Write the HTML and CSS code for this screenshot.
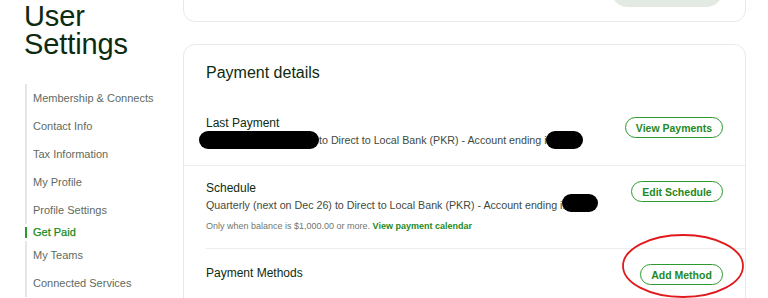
FILE: index.html
```html
<!DOCTYPE html>
<html lang="en">
<head>
<meta charset="utf-8">
<title>User Settings</title>
<link rel="stylesheet" href="styles.css">
</head>
<body>
<div class="page">
  <aside class="sidebar">
    <h1 class="title"><span class="title-line">User</span><span class="title-line">Settings</span></h1>
    <nav class="nav">
      <a class="nav-item">Membership &amp; Connects</a>
      <a class="nav-item">Contact Info</a>
      <a class="nav-item">Tax Information</a>
      <a class="nav-item">My Profile</a>
      <a class="nav-item">Profile Settings</a>
      <a class="nav-item active">Get Paid</a>
      <a class="nav-item">My Teams</a>
      <a class="nav-item">Connected Services</a>
    </nav>
  </aside>
  <main class="main">
    <section class="card card-top">
      <span class="ghost-btn"></span>
    </section>
    <section class="card card-pay">
      <h2 class="card-title">Payment details</h2>
      <div class="row row-first">
        <div class="row-body">
          <div class="row-title">Last Payment</div>
          <div class="row-sub"><span class="blob blob-amount"></span><span>to Direct to Local Bank (PKR) - Account ending in</span><span class="blob blob-acct"></span></div>
        </div>
        <button class="btn btn-first">View Payments</button>
      </div>
      <div class="row row-second">
        <div class="row-body">
          <div class="row-title">Schedule</div>
          <div class="row-sub"><span>Quarterly (next on Dec 26) to Direct to Local Bank (PKR) - Account ending in</span><span class="blob blob-acct2"></span></div>
          <div class="row-note">Only when balance is $1,000.00 or more. <a class="link">View payment calendar</a></div>
        </div>
        <button class="btn btn-second">Edit Schedule</button>
      </div>
      <div class="divider-inset"></div>
      <div class="row row-third">
        <div class="row-body">
          <div class="row-title">Payment Methods</div>
        </div>
        <button class="btn btn-third">Add Method</button>
      </div>
    </section>
  </main>
  <svg class="annotation" width="126" height="68" viewBox="0 0 126 68" aria-hidden="true">
    <ellipse cx="63" cy="33" rx="60" ry="31" fill="none" stroke="#e2191c" stroke-width="1.8"/>
  </svg>
</div>
</body>
</html>
```

FILE: styles.css
```css
* { box-sizing: border-box; }
html, body { margin: 0; padding: 0; background: #ffffff; }
body {
  font-family: "Liberation Sans", Arial, sans-serif;
  color: #0d2b10;
  overflow: hidden;
  height: 298px;
}
.page {
  position: relative;
  display: flex;
  width: 768px;
  height: 298px;
}
.sidebar {
  width: 183px;
  flex: none;
  padding-left: 24px;
}
.title {
  margin: 0;
  padding-top: 3px;
  font-size: 29px;
  font-weight: 400;
  color: #0d2b10;
  letter-spacing: -0.1px;
}
.title-line {
  display: block;
  height: 28px;
  line-height: 27px;
}
.nav {
  margin-top: 25px;
  margin-left: 1px;
  display: flex;
  flex-direction: column;
}
.nav-item {
  display: block;
  height: 28px;
  line-height: 28px;
  padding-left: 6px;
  border-left: 2px solid #e2e7e2;
  font-size: 11px;
  color: #5f6b60;
  white-space: nowrap;
}
.nav-item.active {
  height: 11px;
  line-height: 11px;
  margin: 3px 0;
  border-left: 2px solid #2c9a2c;
  color: #1b8a1b;
  font-weight: 400;
  -webkit-text-stroke: 0.25px #1b8a1b;
}
.main {
  width: 563px;
  flex: none;
}
.card {
  border: 1px solid #e7eae7;
  border-radius: 12px;
  background: #fff;
}
.card-top {
  margin-top: -40px;
  height: 62px;
  display: flex;
  justify-content: flex-end;
  align-items: flex-end;
  padding: 0 23px 14px 0;
}
.ghost-btn {
  width: 110px;
  height: 30px;
  border-radius: 15px;
  background: #e3eae4;
}
.card-pay {
  margin-top: 22px;
  height: 300px;
}
.card-title {
  margin: 0;
  padding: 18px 22px 0;
  font-size: 16px;
  line-height: 20px;
  font-weight: 400;
  color: #0d2b10;
}
.row {
  display: flex;
  justify-content: space-between;
  align-items: flex-start;
  padding: 0 22px;
}
.row-first {
  padding-top: 32px;
  padding-bottom: 16px;
  border-bottom: 1px solid #eceeec;
}
.row-second {
  padding-top: 14px;
  padding-bottom: 13px;
}
.divider-inset {
  margin-left: 22px;
  border-top: 1px solid #eceeec;
}
.row-third {
  padding-top: 16px;
}
.row-title {
  font-size: 12px;
  line-height: 16px;
  color: #0d2b10;
}
.row-sub {
  display: flex;
  align-items: center;
  font-size: 10.7px;
  line-height: 18px;
  color: #3f4a40;
  white-space: nowrap;
}
.row-note {
  margin-top: 3px;
  font-size: 9px;
  line-height: 18px;
  color: #6f7770;
  white-space: nowrap;
}
.link {
  color: #1f8a1f;
  font-weight: 700;
}
.blob {
  display: inline-block;
  height: 18px;
  border-radius: 9px;
  background: #000;
}
.blob-amount {
  width: 120px;
  margin-left: -7px;
}
.blob-acct {
  width: 37px;
  margin-left: -6px;
}
.blob-acct2 {
  width: 36px;
  margin-left: -6px;
  margin-top: -4px;
}
.btn {
  flex: none;
  height: 21px;
  padding: 0 8px;
  border: 1.5px solid #2c9a2c;
  border-radius: 11px;
  background: #fff;
  color: #1f8a1f;
  font-family: "Liberation Sans", Arial, sans-serif;
  font-size: 10.5px;
  font-weight: 700;
  line-height: 18px;
  white-space: nowrap;
}
.btn-first { margin-top: 2px; width: 98px; }
.btn-second { margin-top: 1px; width: 92px; }
.btn-third { margin-top: -1px; width: 83px; }
.annotation {
  position: absolute;
  left: 620px;
  top: 233px;
}
```
